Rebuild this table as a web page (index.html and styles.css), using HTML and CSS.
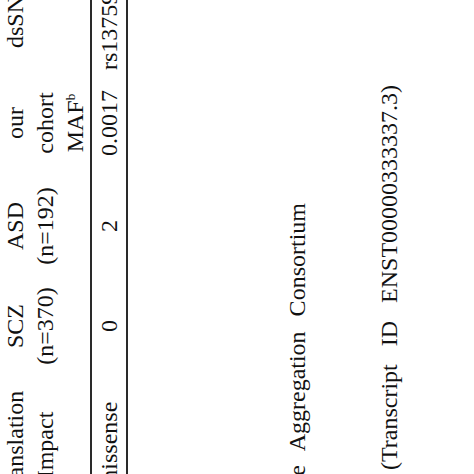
FILE: index.html
```html
<!DOCTYPE html>
<html>
<head>
<meta charset="utf-8">
<link rel="stylesheet" href="styles.css">
</head>
<body>
<div class="stage">
  <div class="sheet">
    <div class="table">
      <div class="row head">
        <div class="cell c1">Translation<br>Impact</div>
        <div class="cell">SCZ<br>(n=370)</div>
        <div class="cell">ASD<br>(n=192)</div>
        <div class="cell">our<br>cohort<br>MAF<sup>b</sup></div>
        <div class="cell c5 h5">dsSNP</div>
      </div>
      <div class="row data">
        <div class="cell c1">missense</div>
        <div class="cell">0</div>
        <div class="cell">2</div>
        <div class="cell">0.0017</div>
        <div class="cell c5">rs137594122</div>
      </div>
    </div>
    <p class="note n1">Exome Aggregation Consortium</p>
    <p class="note n2">(Transcript ID ENST00000333337.3)</p>
  </div>
</div>
</body>
</html>
```
FILE: styles.css
```css
html, body {
  margin: 0;
  padding: 0;
  background: #fff;
  overflow: hidden;
}
.stage {
  width: 474px;
  height: 474px;
  overflow: hidden;
  transform: rotate(-90deg);
  transform-origin: 237px 237px;
  background: #fff;
}
.sheet {
  width: 640px;
  margin-left: -40px;
  font-family: "Liberation Serif", "Times New Roman", serif;
  font-size: 24px;
  line-height: 30px;
  color: #111;
}
.table {
  width: 640px;
}
.row {
  display: grid;
  grid-template-columns: 138px 100px 100px 106px 1fr;
}
.head {
  border-bottom: 2px solid #2a2a2a;
}
.data {
  padding-top: 2px;
  padding-bottom: 2px;
  border-bottom: 2px solid #2a2a2a;
}
.cell {
  text-align: center;
  white-space: nowrap;
}
.c5 {
  text-align: left;
}
.h5 {
  padding-left: 22px;
}
sup {
  font-size: 0.55em;
  line-height: 0;
  vertical-align: 0.6em;
}
.note {
  margin: 0;
  white-space: nowrap;
}
.n1 {
  margin-top: 154px;
  margin-left: -19px;
  word-spacing: 9px;
}
.n2 {
  margin-top: 62px;
  margin-left: 44px;
  word-spacing: 12px;
}
```
